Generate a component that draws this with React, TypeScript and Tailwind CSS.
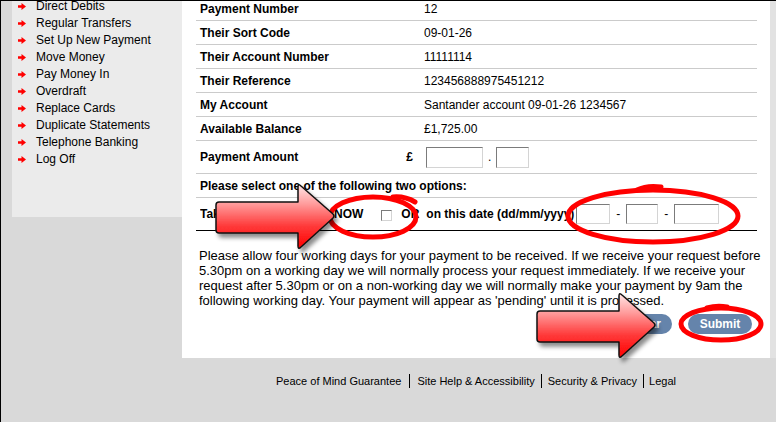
import React from 'react';

const menu = [
  'Direct Debits',
  'Regular Transfers',
  'Set Up New Payment',
  'Move Money',
  'Pay Money In',
  'Overdraft',
  'Replace Cards',
  'Duplicate Statements',
  'Telephone Banking',
  'Log Off',
];

const rows = [
  ['Payment Number', '12'],
  ['Their Sort Code', '09-01-26'],
  ['Their Account Number', '11111114'],
  ['Their Reference', '123456888975451212'],
  ['My Account', 'Santander account 09-01-26 1234567'],
  ['Available Balance', '£1,725.00'],
];

const inset = 'bg-white border border-t-[#7b7b7b] border-l-[#7b7b7b] border-r-[#d4d4d4] border-b-[#d4d4d4]';

function MenuArrow() {
  return (
    <svg width="8" height="7" viewBox="0 0 8 7">
      <polygon points="0,2.2 3.5,2.2 3.5,0 8,3.5 3.5,7 3.5,4.8 0,4.8" fill="#ff0000" />
    </svg>
  );
}

const arrowPath =
  'M215,204 Q215,201 218,201 L297,201 L297,186 Q297,182 300,185 L332,213 Q334,215 332,217 L300,246 Q297,249 297,245 L297,232 L218,232 Q215,232 215,229 Z';

function Overlay() {
  return (
    <svg className="absolute inset-0 pointer-events-none" width="776" height="422" viewBox="0 0 776 422">
      <defs>
        <linearGradient id="red" x1="0" y1="0" x2="0" y2="1">
          <stop offset="0" stopColor="#ffe6e6" />
          <stop offset="0.3" stopColor="#ff9c9c" />
          <stop offset="0.65" stopColor="#ff3a3a" />
          <stop offset="1" stopColor="#ff0000" />
        </linearGradient>
        <filter id="shadow" x="-20%" y="-20%" width="140%" height="150%">
          <feDropShadow dx="3" dy="4" stdDeviation="2" floodColor="#000" floodOpacity="0.45" />
        </filter>
        <filter id="soft">
          <feGaussianBlur stdDeviation="0.6" />
        </filter>
      </defs>
      <g fill="none" stroke="#ff0000" strokeWidth="5" strokeLinecap="round" filter="url(#soft)">
        <ellipse cx="372" cy="216" rx="43" ry="20" />
        <path d="M392,196 Q404,195 414,201" />
        <ellipse cx="652" cy="215" rx="85" ry="26" />
        <path d="M636,189 Q646,184 660,186" />
        <ellipse cx="720" cy="323" rx="40" ry="16" />
        <path d="M706,307 Q716,304 726,306" />
      </g>
      <g filter="url(#shadow)">
        <path d={arrowPath} fill="url(#red)" stroke="#111" strokeWidth="1.5" strokeLinejoin="round" />
        <path
          d={arrowPath}
          transform="translate(321,109)"
          fill="url(#red)"
          stroke="#111"
          strokeWidth="1.5"
          strokeLinejoin="round"
        />
      </g>
    </svg>
  );
}

export default function App() {
  return (
    <div className="relative w-[776px] h-[422px] overflow-hidden bg-[#d9d9d9] border-t border-l border-black font-['Liberation_Sans',Arial,sans-serif] text-[12px] text-black">
      <div className="flex items-start">
        <div className="w-[11px] shrink-0" />

        <div className="w-[170px] h-[216px] shrink-0 bg-[#ebebeb] overflow-hidden">
          <ul className="-mt-[3px] pl-[6px]">
            {menu.map((m) => (
              <li key={m} className="flex items-center gap-[10px] h-[17px] leading-[17px]">
                <MenuArrow />
                <span>{m}</span>
              </li>
            ))}
          </ul>
        </div>

        <div className="w-[588px] shrink-0">
          <div className="h-[357px] bg-white overflow-hidden pl-[14px]">
            <div className="w-[561px] -mt-[4px]">
              {rows.map(([k, v]) => (
                <div key={k} className="flex items-center h-[24px] border-b border-[#cbcbcb] pl-[4px]">
                  <span className="w-[224px] font-bold">{k}</span>
                  <span>{v}</span>
                </div>
              ))}
              <div className="flex items-center h-[33px] border-b border-[#cbcbcb] pl-[4px]">
                <span className="w-[224px] flex justify-between pr-[11px] font-bold">
                  <span>Payment Amount</span>
                  <span>£</span>
                </span>
                <span className={`${inset} ml-[2px] w-[57px] h-[21px]`} />
                <span className="mx-[5px]">.</span>
                <span className={`${inset} w-[33px] h-[21px]`} />
              </div>
              <div className="flex items-center h-[24px] border-b border-[#cbcbcb] pl-[4px] font-bold">
                Please select one of the following two options:
              </div>
              <div className="flex items-center h-[33px] border-b border-black pl-[4px] font-bold">
                <span className="w-[134px] whitespace-nowrap overflow-hidden">Take this payment</span>
                <span>NOW</span>
                <span className={`${inset} ml-[18px] w-[11px] h-[11px] mt-[2px]`} />
                <span className="ml-[9px]">OR</span>
                <span className="ml-[7px] whitespace-nowrap">on this date (dd/mm/yyyy)</span>
                <span className={`${inset} ml-[2px] w-[34px] h-[20px]`} />
                <span className="px-[6px] font-normal">-</span>
                <span className={`${inset} w-[32px] h-[20px]`} />
                <span className="px-[6px] font-normal">-</span>
                <span className={`${inset} w-[45px] h-[20px]`} />
              </div>
              <div className="mt-[17px] pl-[3px] text-[13px] leading-[15px] whitespace-nowrap">
                <div>Please allow four working days for your payment to be received. If we receive your request before</div>
                <div>5.30pm on a working day we will normally process your request immediately. If we receive your</div>
                <div>request after 5.30pm or on a non-working day we will normally make your payment by 9am the</div>
                <div>following working day. Your payment will appear as 'pending' until it is processed.</div>
              </div>
              <div className="flex justify-end gap-[16px] pr-[5px] mt-[6px]">
                <button className="w-[52px] h-[20px] rounded-full bg-[#6584ab] text-white font-bold text-[12px]">
                  Clear
                </button>
                <button className="w-[64px] h-[20px] rounded-full bg-[#6584ab] text-white font-bold text-[12px]">
                  Submit
                </button>
              </div>
            </div>
          </div>

          <div className="flex justify-center items-center mt-[16px] h-[14px] leading-[14px] text-[11px]">
            <span>Peace of Mind Guarantee</span>
            <span className="h-[14px] border-l border-black ml-[8px] mr-[7px]" />
            <span>Site Help &amp; Accessibility</span>
            <span className="h-[14px] border-l border-black ml-[6px] mr-[6px]" />
            <span>Security &amp; Privacy</span>
            <span className="h-[14px] border-l border-black ml-[6px] mr-[5px]" />
            <span>Legal</span>
          </div>
        </div>

        <div className="w-[6px] h-[357px] shrink-0 bg-[#e2e2e2]" />
      </div>

      <Overlay />
    </div>
  );
}
